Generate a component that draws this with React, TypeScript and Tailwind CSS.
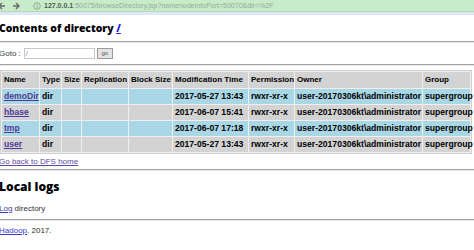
import React from "react";

const rows = [
  { name: "demoDir", time: "2017-05-27 13:43", blue: true },
  { name: "hbase", time: "2017-06-07 15:41", blue: false },
  { name: "tmp", time: "2017-06-07 17:18", blue: true },
  { name: "user", time: "2017-05-27 13:43", blue: false },
];

const cols = [37, 21, 19, 46, 43, 75, 45, 127, 47];
const heads = ["Name", "Type", "Size", "Replication", "Block Size", "Modification Time", "Permission", "Owner", "Group"];

function Hr() {
  return <div className="h-[2px] w-full border-t border-[#a3a3a3] bg-[#e6e6e6]" />;
}

export default function App() {
  return (
    <div className="w-[474px] h-[250px] overflow-hidden bg-white" style={{ fontFamily: '"Liberation Sans", Arial, sans-serif' }}>
      {/* browser bar */}
      <div className="h-[12px] bg-[#c8ebca] flex items-center text-[7px] leading-none border-b border-[#b8d6bc]">
        <svg width="10" height="10" viewBox="0 0 10 10" className="ml-[-3px]">
          <path d="M8 5H2M5 2L2 5l3 3" stroke="#6a6a6a" strokeWidth="1.4" fill="none" />
        </svg>
        <svg width="10" height="10" viewBox="0 0 10 10" className="ml-[4px]">
          <path d="M2 5h6M5 2l3 3-3 3" stroke="#6a6a6a" strokeWidth="1.4" fill="none" />
        </svg>
        <svg width="8" height="8" viewBox="0 0 8 8" className="ml-[12px]">
          <circle cx="4" cy="4" r="3.3" stroke="#8a9a8c" strokeWidth="0.8" fill="none" />
          <path d="M4 3.4v2.6M4 2v0.8" stroke="#8a9a8c" strokeWidth="0.8" />
        </svg>
        <span className="ml-[3px] text-[#4c5c4e] font-bold">127.0.0.1</span>
        <span className="text-[#95ab98]">:50075/browseDirectory.jsp?namenodeInfoPort=50070&amp;dir=%2F</span>
      </div>
      <div className="h-[3px] bg-[#dde8f5]" />

      <div className="ml-[-1px] w-[476px]">
        <div className="h-[26px] flex items-center pt-[1px] text-[10.4px] font-extrabold text-black whitespace-nowrap" style={{ fontFamily: '"Open Sans", sans-serif' }}>
          <span>
            Contents of directory <a className="text-[#1a1adf] underline">/</a>
          </span>
        </div>
        <Hr />
        <div className="h-[21px] flex items-center text-[8px] text-[#444] whitespace-nowrap">
          <span>Goto :</span>
          <div className="ml-[3px] w-[71px] h-[11px] border border-[#c8c8c8] bg-white text-[7px] leading-[9px] pl-[1px] text-[#888]">/</div>
          <div className="ml-[2px] w-[16px] h-[11px] border border-[#9a9a9a] bg-[#e4e4e4] text-[6px] leading-[9px] text-center text-[#555]">go</div>
        </div>
        <Hr />

        <div className="mt-[4px] ml-[1px]">
          <table className="w-[469px] border-separate border-spacing-[1px] bg-[#efefef] border border-[#cfcfcf] table-fixed text-[8.6px] font-bold text-black leading-none">
            <colgroup>
              {cols.map((w, i) => (
                <col key={i} style={{ width: w }} />
              ))}
            </colgroup>
            <thead>
              <tr className="h-[16px]">
                {heads.map((h) => (
                  <th key={h} className="bg-[#d3d3d3] text-left pl-[2px] font-bold text-[8px] whitespace-nowrap overflow-hidden">
                    {h}
                  </th>
                ))}
              </tr>
            </thead>
            <tbody>
              {rows.map((r) => {
                const bg = r.blue ? "bg-[#aad7e6]" : "bg-[#d3d3d3]";
                return (
                  <tr key={r.name} className="h-[15px]">
                    <td className={`${bg} pl-[2px]`}>
                      <a className="text-[#4f3a98] underline">{r.name}</a>
                    </td>
                    <td className={`${bg} pl-[2px]`}>dir</td>
                    <td className={bg}></td>
                    <td className={bg}></td>
                    <td className={bg}></td>
                    <td className={`${bg} pl-[2px] whitespace-nowrap`}>{r.time}</td>
                    <td className={`${bg} pl-[2px] whitespace-nowrap`}>rwxr-xr-x</td>
                    <td className={`${bg} pl-[2px] whitespace-nowrap`}>user-20170306kt\administrator</td>
                    <td className={`${bg} pl-[2px] whitespace-nowrap`}>supergroup</td>
                  </tr>
                );
              })}
            </tbody>
          </table>
        </div>

        <div className="h-[15px] flex items-center text-[8px]">
          <a className="text-[#5e4aa0] underline">Go back to DFS home</a>
        </div>
        <Hr />
        <div className="h-[32px] flex items-center text-[12px] font-extrabold text-black" style={{ fontFamily: '"Open Sans", sans-serif' }}>
          Local logs
        </div>
        <div className="h-[12px] flex items-center text-[8px] text-[#333]">
          <a className="text-[#3a3aa8] underline">Log</a>
          <span>&nbsp;directory</span>
        </div>
        <div className="mt-[4px]">
          <Hr />
        </div>
        <div className="h-[20px] flex items-center text-[8px] text-[#333]">
          <a className="text-[#3a3ad0] underline">Hadoop</a>
          <span>, 2017.</span>
        </div>
      </div>
    </div>
  );
}
